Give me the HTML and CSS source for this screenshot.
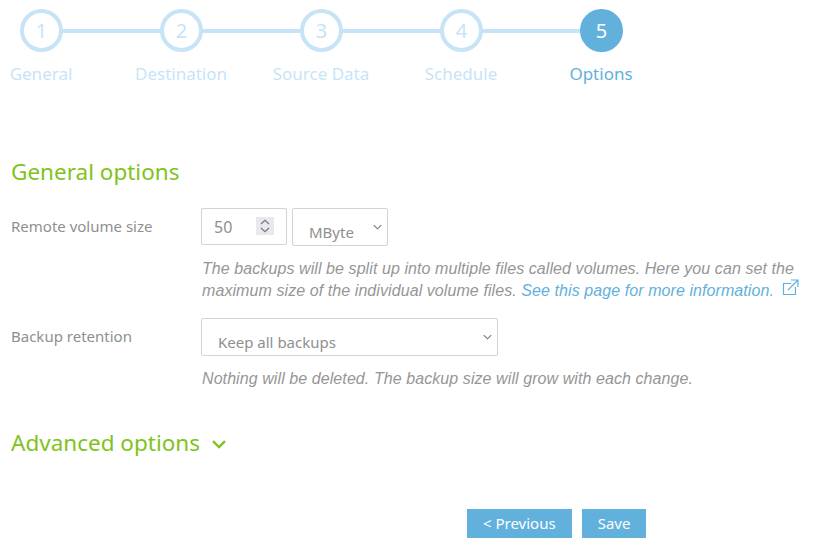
FILE: index.html
```html
<!DOCTYPE html>
<html lang="en">
<head>
<meta charset="utf-8">
<title>Options</title>
<link rel="stylesheet" href="styles.css">
</head>
<body>
<ol class="steps">
  <li class="step"><span class="circle">1</span><span class="step-label">General</span></li>
  <li class="step"><span class="circle">2</span><span class="step-label">Destination</span></li>
  <li class="step"><span class="circle">3</span><span class="step-label">Source Data</span></li>
  <li class="step"><span class="circle">4</span><span class="step-label">Schedule</span></li>
  <li class="step active"><span class="circle">5</span><span class="step-label">Options</span></li>
</ol>
<main class="content">
  <h2 class="section-title">General options</h2>
  <div class="field">
    <label class="field-label" for="vol">Remote volume size</label>
    <div class="field-body">
      <div class="controls">
        <div class="number-wrap">
          <input id="vol" class="number" type="number" value="50">
          <span class="spin"><svg viewBox="0 0 18 18" width="18" height="18" fill="none" stroke="#77777f" stroke-width="1.2"><path d="M5 7 9 3.4 13 7M5 11 9 14.6 13 11"/></svg></span>
        </div>
        <select class="select unit"><option>MByte</option></select>
      </div>
      <p class="hint">The backups will be split up into multiple files called volumes. Here you can set the maximum size of the individual volume files. <a class="link" href="#">See this page for more information.</a>
        <svg class="ext" viewBox="0 0 17 17" width="17" height="17" fill="none" stroke="#62b0dc" stroke-width="1.2"><path d="M9 4.5H1.5V15.5H13.5V8"/><path d="M6 11 15.5 1.5M9 1H16V8"/></svg></p>
    </div>
  </div>
  <div class="field retention">
    <label class="field-label" for="ret">Backup retention</label>
    <div class="field-body">
      <select id="ret" class="select keep"><option>Keep all backups</option></select>
      <p class="hint">Nothing will be deleted. The backup size will grow with each change.</p>
    </div>
  </div>
  <h2 class="section-title advanced">Advanced options
    <svg class="chev" viewBox="0 0 14 9" width="14" height="9" fill="none" stroke="#7fc31c" stroke-width="2.4"><path d="M1 1.2 7 7 13 1.2"/></svg></h2>
  <div class="actions">
    <button class="btn" type="button">&lt; Previous</button>
    <button class="btn" type="button">Save</button>
  </div>
</main>
</body>
</html>
```
FILE: styles.css
```css
* { box-sizing: border-box; }
html, body { margin: 0; padding: 0; }
body {
  width: 815px;
  height: 558px;
  overflow: hidden;
  background: #fff;
  font-family: "Noto Sans", "Liberation Sans", sans-serif;
  font-size: 15px;
  color: #8f8f8f;
}
.steps {
  display: flex;
  list-style: none;
  margin: 0 0 0 -28.5px;
  padding: 9px 0 0;
}
.step {
  position: relative;
  width: 140px;
  display: flex;
  flex-direction: column;
  align-items: center;
}
.step:not(:last-child)::after {
  content: "";
  position: absolute;
  top: 20px;
  left: 90px;
  width: 100px;
  height: 4px;
  background: #c7e4f7;
}
.circle {
  width: 43px;
  height: 43px;
  border: 4px solid #c7e4f7;
  border-radius: 50%;
  display: flex;
  align-items: center;
  justify-content: center;
  font-size: 20px;
  color: #c7e4f7;
}
.step-label {
  margin-top: 11px;
  margin-right: 1px;
  font-size: 17px;
  line-height: 22px;
  color: #c7e4f7;
}
.active .circle {
  background: #62b0dc;
  border-color: #62b0dc;
  color: #fff;
}
.active .step-label { color: #62b0dc; }
.content { padding: 0 0 0 11px; }
.section-title {
  margin: 71px 0 0;
  font-size: 22.5px;
  line-height: 32px;
  font-weight: 400;
  color: #7fc31c;
}
.field { display: flex; margin-top: 20px; }
.field-label {
  width: 190px;
  flex: none;
  padding-top: 8px;
  font-size: 15px;
  line-height: 20px;
}
.field-body { flex: 1; min-width: 0; }
.controls { display: flex; gap: 5px; }
.number-wrap { position: relative; width: 86px; height: 37px; }
.number {
  width: 100%;
  height: 100%;
  padding: 0 12px;
  border: 1px solid #d3d3d3;
  border-radius: 2px;
  font: inherit;
  font-size: 16px;
  color: #8f8f8f;
  appearance: textfield;
}
.number::-webkit-inner-spin-button { display: none; }
.spin {
  position: absolute;
  top: 9px;
  left: 55px;
  width: 18px;
  height: 18px;
  background: #e9e9ed;
  display: flex;
}
.select {
  height: 38px;
  padding: 9px 12px 0 16px;
  border: 1px solid #d3d3d3;
  border-radius: 2px;
  background: #fff url("data:image/svg+xml,%3Csvg xmlns='http://www.w3.org/2000/svg' viewBox='0 0 10 6'%3E%3Cpath d='M.8 .8 5 5 9.2 .8' fill='none' stroke='%23777' stroke-width='1.2'/%3E%3C/svg%3E") no-repeat right 5px top 15px / 9px 6px;
  font: inherit;
  font-size: 15px;
  color: #8f8f8f;
  appearance: none;
}
.unit { width: 96px; }
.keep { width: 297px; display: block; }
.hint {
  margin: 13px 0 0;
  padding-left: 1px;
  width: 618px;
  font-family: "Liberation Sans", sans-serif;
  font-size: 16px;
  letter-spacing: 0.08px;
  line-height: 20px;
  font-style: italic;
  color: #969696;
}
.link { color: #62b0dc; text-decoration: none; }
.ext { margin-left: 3px; vertical-align: 0; }
.retention { margin-top: 17px; }
.advanced { margin-top: 38px; }
.chev { margin-left: 6px; vertical-align: 2px; }
.actions {
  display: flex;
  gap: 10px;
  margin: 50px 0 0 456px;
}
.btn {
  height: 29px;
  padding: 0 16px 2px;
  border: 0;
  background: #62b0dc;
  color: #fff;
  font: inherit;
  font-size: 15px;
}
```
